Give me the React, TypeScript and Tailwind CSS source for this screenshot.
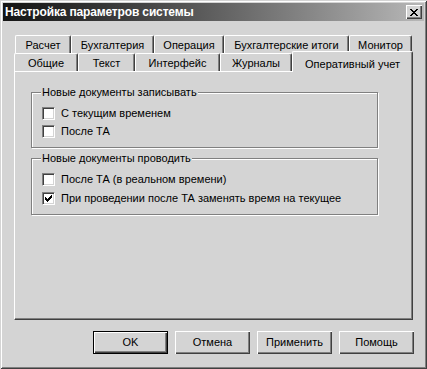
const font = { fontFamily: '"Liberation Sans", Arial, sans-serif' }

const rowOne = [
  { label: 'Расчет', w: 'w-[56px]' },
  { label: 'Бухгалтерия', w: 'w-[83px]' },
  { label: 'Операция', w: 'w-[70px]' },
  { label: 'Бухгалтерские итоги', w: 'w-[125px]' },
  { label: 'Монитор', w: 'w-[63px]' },
]

const rowTwo = [
  { label: 'Общие', w: 'w-[64px]' },
  { label: 'Текст', w: 'w-[57px]' },
  { label: 'Интерфейс', w: 'w-[85px]' },
  { label: 'Журналы', w: 'w-[72px]' },
]

function Tab({ label, w }: { label: string; w: string }) {
  return (
    <div
      className={`${w} h-[18px] flex items-center justify-center border-l border-t border-r border-l-white border-t-white border-r-[#404040] rounded-t-[2px] shadow-[inset_-1px_0_#808080] text-[11px] text-black pt-[1px]`}
    >
      {label}
    </div>
  )
}

function CheckMark() {
  // classic 7x7 pixel check
  const px = [
    [6, 0], [5, 1], [6, 1], [0, 2], [4, 2], [5, 2], [6, 2],
    [0, 3], [1, 3], [3, 3], [4, 3], [5, 3],
    [0, 4], [1, 4], [2, 4], [3, 4], [4, 4],
    [1, 5], [2, 5], [3, 5], [2, 6],
  ]
  return (
    <svg width="7" height="7" viewBox="0 0 7 7" shapeRendering="crispEdges" className="absolute left-[1px] top-[1px]">
      {px.map(([x, y]) => (
        <rect key={`${x}-${y}`} x={x} y={y} width="1" height="1" fill="#000" />
      ))}
    </svg>
  )
}

function Checkbox({ label, checked }: { label: string; checked?: boolean }) {
  return (
    <div className="flex items-center h-[13px]">
      <div className="relative w-[13px] h-[13px] bg-white border-t border-l border-b border-r border-t-[#808080] border-l-[#808080] border-b-white border-r-white shadow-[inset_1px_1px_#404040,inset_-1px_-1px_#d4d4d4]">
        {checked && (
          <div className="absolute left-[1px] top-[1px] w-[9px] h-[9px]">
            <CheckMark />
          </div>
        )}
      </div>
      <span className="ml-[6px] text-[11px] text-black leading-none">{label}</span>
    </div>
  )
}

function GroupBox({ title, children, h }: { title: string; children: React.ReactNode; h: string }) {
  return (
    <div className={`relative w-[347px] ${h} border border-[#808080] shadow-[inset_1px_1px_#fff,1px_1px_#fff]`}>
      <span className="absolute left-[9px] -top-[7px] bg-[#d4d4d4] px-[1px] text-[11px] leading-[13px] text-black">
        {title}
      </span>
      {children}
    </div>
  )
}

function Button({ label, isDefault }: { label: string; isDefault?: boolean }) {
  return (
    <div className={`w-[75px] h-[23px] ${isDefault ? 'border border-black' : ''}`}>
      <div className="w-full h-full flex items-center justify-center text-[11px] text-black shadow-[inset_1px_1px_#fff,inset_-1px_-1px_#404040,inset_-2px_-2px_#808080]">
        {label}
      </div>
    </div>
  )
}

export default function App() {
  return (
    <div
      style={font}
      className="w-[427px] h-[369px] bg-[#d4d4d4] p-[3px] flex flex-col shadow-[inset_1px_1px_#d4d4d4,inset_-1px_-1px_#404040,inset_2px_2px_#fff,inset_-2px_-2px_#808080]"
    >
      {/* title bar */}
      <div className="h-[18px] flex items-center justify-between bg-gradient-to-r from-[#141414] to-[#b8b8b8] pl-[2px] pr-[2px]">
        <span className="text-white font-bold text-[12px] tracking-[-0.15px] leading-none">Настройка параметров системы</span>
        <div className="w-[16px] h-[14px] bg-[#d4d4d4] flex items-center justify-center shadow-[inset_1px_1px_#fff,inset_-1px_-1px_#404040,inset_-2px_-2px_#808080]">
          <svg width="8" height="7" viewBox="0 0 8 7" shapeRendering="crispEdges">
            <path d="M0 0h2l2 2.5L6 0h2L5 3.5 8 7H6L4 4.5 2 7H0l3-3.5z" fill="#000" />
          </svg>
        </div>
      </div>

      {/* tabs + page */}
      <div className="pl-[11px] pt-[14px]">
        <div className="flex pl-[1px]">
          {rowOne.map((t) => (
            <Tab key={t.label} {...t} />
          ))}
        </div>
        <div className="flex">
          {rowTwo.map((t) => (
            <Tab key={t.label} {...t} />
          ))}
          <div className="relative z-10 w-[121px] h-[21px] -mt-[2px] -mb-[1px] bg-[#d4d4d4] flex items-start justify-center pt-[4px] border-l border-t border-r border-l-white border-t-white border-r-[#404040] rounded-t-[2px] shadow-[inset_-1px_0_#808080] text-[11px] text-black">
            Оперативный учет
          </div>
        </div>
        <div className="w-[399px] h-[249px] border border-t-white border-l-white border-b-[#404040] border-r-[#404040] shadow-[inset_-1px_-1px_#808080] pl-[16px] pt-[20px]">
          <GroupBox title="Новые документы записывать" h="h-[56px]">
            <div className="flex flex-col gap-[5px] pl-[10px] pt-[14px]">
              <Checkbox label="С текущим временем" />
              <Checkbox label="После ТА" />
            </div>
          </GroupBox>
          <div className="h-[10px]" />
          <GroupBox title="Новые документы проводить" h="h-[57px]">
            <div className="flex flex-col gap-[6px] pl-[10px] pt-[14px]">
              <Checkbox label="После ТА (в реальном времени)" />
              <Checkbox label="При проведении после ТА заменять время на текущее" checked />
            </div>
          </GroupBox>
        </div>
      </div>

      {/* buttons */}
      <div className="flex justify-end gap-[7px] pr-[10px] mt-[11px]">
        <Button label="OK" isDefault />
        <Button label="Отмена" />
        <Button label="Применить" />
        <Button label="Помощь" />
      </div>
    </div>
  )
}
